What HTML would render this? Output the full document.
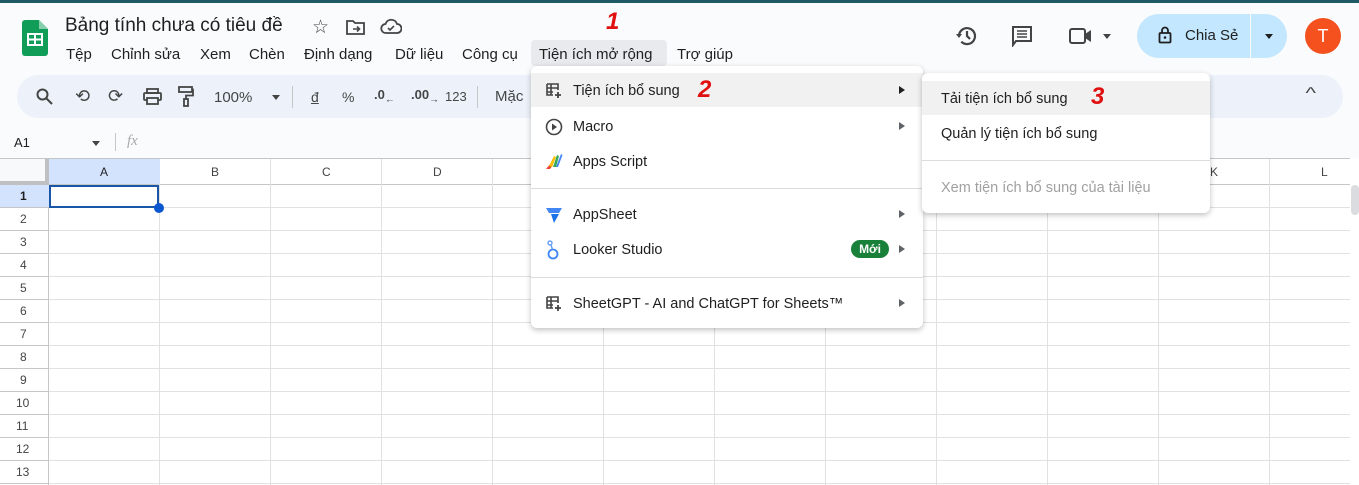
<!DOCTYPE html>
<html><head><meta charset="utf-8"><style>
*{margin:0;padding:0;box-sizing:border-box}
body{width:1359px;height:485px;overflow:hidden;background:#f9fbfd;font-family:"Liberation Sans",Arial,sans-serif;color:#1f1f1f;position:relative}
.a{position:absolute}
.t{position:absolute;white-space:nowrap}
.menu{font-size:15px}
.mi{position:absolute;left:0;right:0;height:34px}
.mi span{position:absolute;top:10px;white-space:nowrap;font-size:14.5px;color:#1f1f1f}
.arr{position:absolute;right:18px;top:13px;width:0;height:0;border-left:6px solid #5f6368;border-top:4px solid transparent;border-bottom:4px solid transparent}
.tb{color:#444746;font-size:14px}
</style></head><body>
<div class="a" style="left:0;top:0;width:1359px;height:3px;background:#1e5a66"></div>
<svg class="a" style="left:22px;top:20px" width="26" height="36" viewBox="0 0 26 36"><path d="M3 0h14l9 9v24a3 3 0 0 1-3 3H3a3 3 0 0 1-3-3V3a3 3 0 0 1 3-3z" fill="#0f9d58"/><path d="M17 0v9h9z" fill="#87ceac"/><rect x="6" y="14" width="14" height="11" fill="none" stroke="#fff" stroke-width="2"/><path d="M6 19.5h14M13 14v11" stroke="#fff" stroke-width="2"/></svg>
<div class="t" style="left:65px;top:15px;font-size:19px;color:#1f1f1f">Bảng tính chưa có tiêu đề</div>
<div class="t" style="left:312px;top:16px;font-size:19px;color:#444">☆</div>
<svg class="a" style="left:346px;top:19px" width="20" height="16" viewBox="0 0 20 16"><path d="M1 2h6l2 2h9v11H1z" fill="none" stroke="#444" stroke-width="1.8"/><path d="M7 10h6M11 7.5l2.5 2.5L11 12.5" fill="none" stroke="#444" stroke-width="1.6"/></svg>
<svg class="a" style="left:380px;top:18px" width="22" height="17" viewBox="0 0 22 17"><path d="M6 15a4.5 4.5 0 0 1-.5-9A6 6 0 0 1 17 6a4.5 4.5 0 0 1 0 9z" fill="none" stroke="#444" stroke-width="1.8"/><path d="M8 10l2 2 4-4" fill="none" stroke="#444" stroke-width="1.6"/></svg>
<div class="menu">
<span class="t" style="left:66px;top:46px">Tệp</span>
<span class="t" style="left:111px;top:46px">Chỉnh sửa</span>
<span class="t" style="left:200px;top:46px">Xem</span>
<span class="t" style="left:249px;top:46px">Chèn</span>
<span class="t" style="left:304px;top:46px">Định dạng</span>
<span class="t" style="left:395px;top:46px">Dữ liệu</span>
<span class="t" style="left:462px;top:46px">Công cụ</span>
<div class="a" style="left:531px;top:40px;width:136px;height:26px;background:#e8eaed;border-radius:4px"></div>
<span class="t" style="left:539px;top:46px">Tiện ích mở rộng</span>
<span class="t" style="left:677px;top:46px">Trợ giúp</span>
</div>
<div class="t" style="left:606px;top:8px;font-size:24px;font-style:italic;font-weight:bold;color:#e01010">1</div>
<svg class="a" style="left:955px;top:24px" width="24" height="24" viewBox="0 0 24 24"><path d="M4 12a8 8 0 1 1 2.3 5.7" fill="none" stroke="#444" stroke-width="2.2"/><path d="M1 10l3 4 3-4z" fill="#444"/><path d="M12 7v5l3 3" fill="none" stroke="#444" stroke-width="2.2"/></svg>
<svg class="a" style="left:1011px;top:25px" width="22" height="22" viewBox="0 0 22 22"><path d="M2 2h18v14H5l-3 4z" fill="none" stroke="#444" stroke-width="2"/><path d="M6 6h10M6 9h10M6 12h10" stroke="#444" stroke-width="1.6"/></svg>
<svg class="a" style="left:1069px;top:27px" width="26" height="18" viewBox="0 0 26 18"><rect x="1" y="2" width="15" height="14" rx="2" fill="none" stroke="#444" stroke-width="2"/><path d="M16 7l6-4v12l-6-4z" fill="#444"/></svg>
<div class="a" style="left:1103px;top:34px;border-top:5px solid #444;border-left:4px solid transparent;border-right:4px solid transparent"></div>
<div class="a" style="left:1137px;top:14px;width:150px;height:44px;background:#c2e7ff;border-radius:22px"></div>
<div class="a" style="left:1250px;top:14px;width:1px;height:44px;background:#f9fbfd"></div>
<svg class="a" style="left:1158px;top:26px" width="14" height="18" viewBox="0 0 14 18"><rect x="1.5" y="7" width="11" height="9.5" rx="1" fill="none" stroke="#1f1f1f" stroke-width="1.8"/><path d="M4 7V4.5a3 3 0 0 1 6 0V7" fill="none" stroke="#1f1f1f" stroke-width="1.8"/><circle cx="7" cy="11.5" r="1.3" fill="#1f1f1f"/></svg>
<div class="t" style="left:1185px;top:27px;font-size:15px;color:#1f1f1f">Chia Sẻ</div>
<div class="a" style="left:1265px;top:34px;border-top:5px solid #1f1f1f;border-left:4px solid transparent;border-right:4px solid transparent"></div>
<div class="a" style="left:1305px;top:18px;width:36px;height:36px;border-radius:50%;background:#f4511e;color:#fff;font-size:18px;text-align:center;line-height:36px">T</div>
<div class="a" style="left:17px;top:75px;width:1326px;height:43px;background:#edf2fa;border-radius:22px"></div>
<svg class="a" style="left:36px;top:88px" width="17" height="17" viewBox="0 0 17 17"><circle cx="6.5" cy="6.5" r="5" fill="none" stroke="#444" stroke-width="2"/><path d="M10 10l6 6" stroke="#444" stroke-width="2"/></svg>
<div class="t tb" style="left:75px;top:86px;font-size:18px">⟲</div>
<div class="t tb" style="left:108px;top:86px;font-size:18px">⟳</div>
<svg class="a" style="left:143px;top:88px" width="19" height="17" viewBox="0 0 19 17"><rect x="4" y="1" width="11" height="4" fill="none" stroke="#444" stroke-width="1.8"/><rect x="1" y="5" width="17" height="7" rx="1" fill="none" stroke="#444" stroke-width="1.8"/><rect x="4" y="10" width="11" height="6" fill="#edf2fa" stroke="#444" stroke-width="1.8"/></svg>
<svg class="a" style="left:178px;top:86px" width="16" height="21" viewBox="0 0 16 21"><rect x="1" y="1" width="13" height="5" fill="none" stroke="#444" stroke-width="1.8"/><path d="M14 3.5h1v6H8v4" fill="none" stroke="#444" stroke-width="1.8"/><rect x="6" y="13" width="4" height="7" fill="none" stroke="#444" stroke-width="1.8"/></svg>
<div class="t tb" style="left:214px;top:89px;font-size:15px">100%</div>
<div class="a" style="left:272px;top:95px;border-top:5px solid #444;border-left:4px solid transparent;border-right:4px solid transparent"></div>
<div class="a" style="left:292px;top:86px;width:1px;height:22px;background:#c7c7c7"></div>
<div class="t tb" style="left:311px;top:89px;text-decoration:underline">đ</div>
<div class="t tb" style="left:342px;top:89px">%</div>
<div class="t tb" style="left:374px;top:87px;font-weight:bold;font-size:13px">.0<sub style="font-size:10px">←</sub></div>
<div class="t tb" style="left:411px;top:87px;font-weight:bold;font-size:13px">.00<sub style="font-size:10px">→</sub></div>
<div class="t tb" style="left:445px;top:89px;font-size:13px">123</div>
<div class="a" style="left:477px;top:86px;width:1px;height:22px;background:#c7c7c7"></div>
<div class="t tb" style="left:495px;top:88px;font-size:15px">Mặc</div>
<div class="t" style="left:1307px;top:85px;font-size:16px;color:#444;transform:scaleX(1.4)">^</div>
<div class="t" style="left:14px;top:135px;font-size:13px">A1</div>
<div class="a" style="left:92px;top:141px;border-top:5px solid #444;border-left:4px solid transparent;border-right:4px solid transparent"></div>
<div class="a" style="left:115px;top:133px;width:1px;height:18px;background:#c7c7c7"></div>
<div class="t" style="left:127px;top:133px;font-size:15px;font-style:italic;font-family:'Liberation Serif',serif;color:#aaa">fx</div>
<div class="a" style="left:0;top:158px;width:1359px;height:327px;background:#fff"></div>
<div class="a" style="left:0;top:158px;width:1350px;height:1px;background:#c4c7c5"></div>
<div class="a" style="left:0;top:159px;width:49px;height:26px;background:#f8f9fa;border-right:4px solid #c0c0c0;border-bottom:4px solid #c0c0c0"></div>
<div class="a" style="left:49px;top:159px;width:1301px;height:326px;background-image:repeating-linear-gradient(90deg,transparent 0 110px,#e1e1e1 110px 111px),repeating-linear-gradient(180deg,transparent 0 25px,#c4c7c5 25px 26px,transparent 26px 26px);background-size:1301px 326px, 1301px 26px;background-repeat:repeat,no-repeat"></div>
<div class="a" style="left:49px;top:185px;width:1301px;height:300px;background-image:repeating-linear-gradient(180deg,transparent 0 22px,#e1e1e1 22px 23px)"></div>
<div class="a" style="left:0;top:185px;width:49px;height:300px;background-image:repeating-linear-gradient(180deg,transparent 0 22px,#c4c7c5 22px 23px);border-right:1px solid #c4c7c5"></div>
<div class="a" style="left:49px;top:159px;width:111px;height:25px;background:#d3e3fd"></div>
<div class="a" style="left:0;top:185px;width:49px;height:22px;background:#d3e3fd"></div>
<div style="font-size:12px;color:#444">
<span class="t" style="left:100px;top:165px;color:#1f1f1f">A</span><span class="t" style="left:211px;top:165px">B</span><span class="t" style="left:322px;top:165px">C</span><span class="t" style="left:433px;top:165px">D</span><span class="t" style="left:1210px;top:165px">K</span><span class="t" style="left:1321px;top:165px">L</span>
<span class="t" style="left:20px;top:189px;font-weight:bold;color:#1f1f1f">1</span>
<span class="t" style="left:20px;top:212px">2</span><span class="t" style="left:20px;top:235px">3</span><span class="t" style="left:20px;top:258px">4</span><span class="t" style="left:20px;top:281px">5</span><span class="t" style="left:20px;top:304px">6</span><span class="t" style="left:20px;top:327px">7</span><span class="t" style="left:20px;top:350px">8</span><span class="t" style="left:20px;top:373px">9</span><span class="t" style="left:16px;top:396px">10</span><span class="t" style="left:16px;top:419px">11</span><span class="t" style="left:16px;top:442px">12</span><span class="t" style="left:16px;top:465px">13</span>
</div>
<div class="a" style="left:49px;top:185px;width:110px;height:23px;border:2px solid #1a56a8"></div>
<div class="a" style="left:154px;top:203px;width:10px;height:10px;border-radius:50%;background:#0b57d0"></div>
<div class="a" style="left:1351px;top:185px;width:8px;height:30px;background:#dadce0;border-radius:4px"></div>
<div class="a" style="left:531px;top:66px;width:392px;height:262px;background:#fff;border-radius:6px;box-shadow:0 2px 6px rgba(0,0,0,.25)">
<div class="mi" style="top:7px;background:#f1f1f1"><svg class="a" style="left:15px;top:10px" width="16" height="16" viewBox="0 0 16 16"><path d="M1 1h11v6M1 1v11h6M1 5h11M1 9h6M5 1v11" fill="none" stroke="#444" stroke-width="1.6"/><path d="M12 9v6M9 12h6" stroke="#444" stroke-width="1.8"/></svg><span style="left:42px">Tiện ích bổ sung</span><div class="arr" style="border-left-color:#1f1f1f"></div></div>
<div class="mi" style="top:43px"><svg class="a" style="left:14px;top:9px" width="18" height="18" viewBox="0 0 18 18"><circle cx="9" cy="9" r="7.5" fill="none" stroke="#444" stroke-width="1.6"/><path d="M7 5.5v7l5-3.5z" fill="#444"/></svg><span style="left:42px">Macro</span><div class="arr"></div></div>
<div class="mi" style="top:78px"><svg class="a" style="left:14px;top:9px" width="18" height="17" viewBox="0 0 18 17"><path d="M1 16l5-6 2 2-3 4z" fill="#ea4335"/><path d="M4 13L9 3l2 1-4 10z" fill="#fbbc04"/><path d="M8 14l4-12 2 1-3 11z" fill="#34a853"/><path d="M11 14l5-13 1.5 1L13 14z" fill="#4285f4"/></svg><span style="left:42px">Apps Script</span></div>
<div class="a" style="left:0;right:0;top:122px;height:1px;background:#dadce0"></div>
<div class="mi" style="top:131px"><svg class="a" style="left:15px;top:11px" width="16" height="15" viewBox="0 0 16 15"><path d="M0 0h16l-3 5H3z" fill="#4285f4"/><path d="M5 6h8l-5 9z" fill="#1a73e8"/></svg><span style="left:42px">AppSheet</span><div class="arr"></div></div>
<div class="mi" style="top:166px"><svg class="a" style="left:16px;top:8px" width="12" height="20" viewBox="0 0 12 20"><circle cx="6" cy="14" r="4.5" fill="none" stroke="#4285f4" stroke-width="1.8"/><circle cx="3" cy="3" r="2" fill="none" stroke="#669df6" stroke-width="1.4"/><path d="M4 5l1.5 4.5" stroke="#669df6" stroke-width="1.4"/></svg><span style="left:42px">Looker Studio</span><div class="a" style="left:320px;top:8px;width:38px;height:18px;background:#188038;border-radius:9px;color:#fff;font-size:12px;font-weight:bold;text-align:center;line-height:18px">Mới</div><div class="arr"></div></div>
<div class="a" style="left:0;right:0;top:211px;height:1px;background:#dadce0"></div>
<div class="mi" style="top:220px"><svg class="a" style="left:15px;top:10px" width="16" height="16" viewBox="0 0 16 16"><path d="M1 1h11v6M1 1v11h6M1 5h11M1 9h6M5 1v11" fill="none" stroke="#444" stroke-width="1.6"/><path d="M12 9v6M9 12h6" stroke="#444" stroke-width="1.8"/></svg><span style="left:42px">SheetGPT - AI and ChatGPT for Sheets™</span><div class="arr"></div></div>
</div>
<div class="t" style="left:698px;top:76px;font-size:24px;font-style:italic;font-weight:bold;color:#e01010">2</div>
<div class="a" style="left:922px;top:73px;width:288px;height:140px;background:#fff;border-radius:6px;box-shadow:0 2px 6px rgba(0,0,0,.25)">
<div class="mi" style="top:8px;background:#f1f1f1"><span style="left:19px">Tải tiện ích bổ sung</span></div>
<div class="mi" style="top:43px"><span style="left:19px">Quản lý tiện ích bổ sung</span></div>
<div class="a" style="left:0;right:0;top:87px;height:1px;background:#dadce0"></div>
<div class="mi" style="top:97px"><span style="left:19px;color:#a0a0a0">Xem tiện ích bổ sung của tài liệu</span></div>
</div>
<div class="t" style="left:1091px;top:83px;font-size:24px;font-style:italic;font-weight:bold;color:#e01010">3</div>
</body></html>
